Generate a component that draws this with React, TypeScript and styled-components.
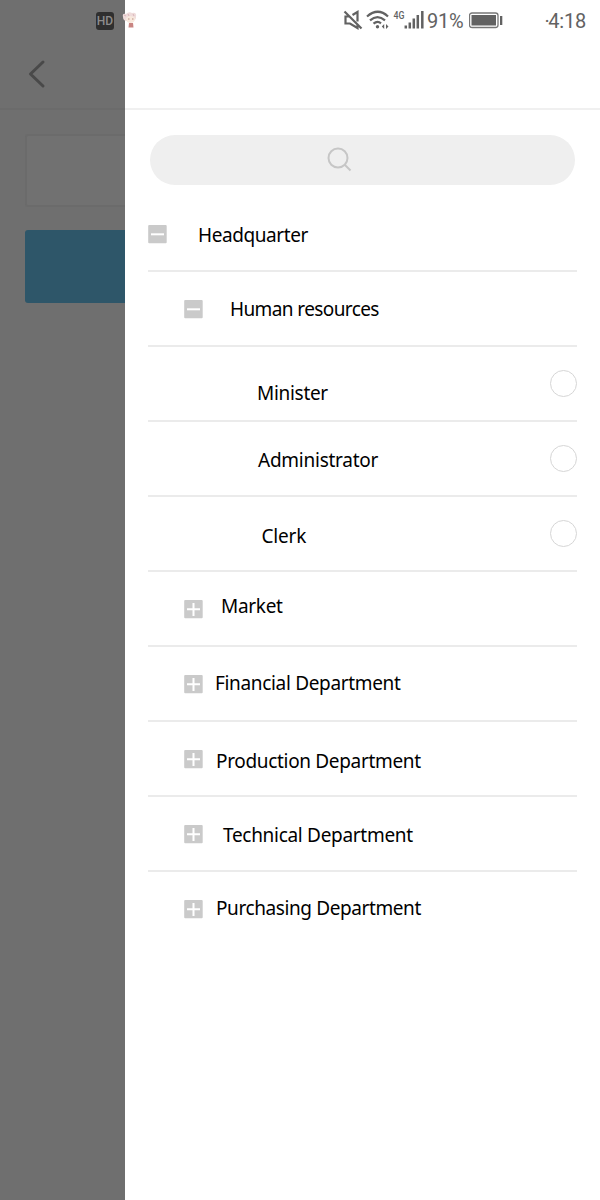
import React from "react";
import styled, { createGlobalStyle } from "styled-components";

const GlobalStyle = createGlobalStyle`
  * { box-sizing: border-box; }
  body { margin: 0; background: #fff; font-family: "Noto Sans", "Open Sans", sans-serif; }
`;

const Screen = styled.div`
  position: relative;
  display: grid;
  grid-template-columns: 125px 475px;
  width: 600px;
  height: 1200px;
  overflow: hidden;
`;

const StatusBar = styled.div`
  position: absolute;
  inset: 0 0 auto 0;
  display: flex;
  align-items: flex-start;
  height: 40px;
  font-family: Roboto, sans-serif;
  color: #626262;
`;

const HdBadge = styled.div`
  width: 18px;
  height: 18px;
  margin: 11.5px 0 0 96px;
  border-radius: 3px;
  background: #2f2f2f;
  color: #8c8c8c;
  font-size: 12px;
  font-weight: 500;
  line-height: 18px;
  text-align: center;
`;

const Mascot = styled.svg`
  margin: 11px 0 0 8px;
`;

const StatusIcons = styled.svg`
  margin-left: 204px;
`;

const StatusText = styled.span<{ $left: number }>`
  margin: 9px 0 0 ${(p) => p.$left}px;
  font-size: 20px;
  line-height: 24px;
  letter-spacing: -0.2px;
`;

const Dot = styled.span`
  letter-spacing: -1.5px;
`;

const Battery = styled.svg`
  margin: 12px 0 0 5px;
`;

const Backdrop = styled.div`
  background: #6f6f6f;
  overflow: hidden;
`;

const BackBar = styled.div`
  height: 110px;
  padding: 59px 0 0 27px;
  border-bottom: 2px solid #6b6b6b;
`;

const DimField = styled.div`
  height: 73px;
  margin: 24px 0 0 25px;
  border: 2px solid #6b6b6b;
  border-right: 0;
  border-radius: 3px 0 0 3px;
  background: #717171;
`;

const DimButton = styled.div`
  height: 73px;
  margin: 23px 0 0 25px;
  border-radius: 3px 0 0 3px;
  background: #2e5669;
`;

const Drawer = styled.div`
  background: #fff;
`;

const DrawerHeader = styled.div`
  height: 110px;
  border-bottom: 2px solid #f0f0f0;
`;

const SearchField = styled.div`
  display: flex;
  width: 425px;
  height: 50px;
  margin: 25px 0 12px 25px;
  padding: 12px 0 0 177px;
  border-radius: 25px;
  background: #efefef;
`;

const Tree = styled.div`
  width: 429px;
  margin-left: 23px;
`;

const Row = styled.div<{ $indent: number; $last?: boolean }>`
  display: flex;
  align-items: flex-start;
  height: 75px;
  padding-left: ${(p) => p.$indent}px;
  border-bottom: ${(p) => (p.$last ? "0" : "2px solid #ebebeb")};
`;

const Toggle = styled.svg<{ $root: boolean }>`
  flex: none;
  width: 19px;
  height: 19px;
  margin: 28px ${(p) => (p.$root ? 0.5 : 0)}px 0 ${(p) => (p.$root ? -0.5 : 0)}px;
`;

const Label = styled.span<{ $gap: number; $top: number; $spacing: number }>`
  margin: ${(p) => p.$top}px 0 0 ${(p) => p.$gap}px;
  font-size: 19px;
  line-height: 26px;
  letter-spacing: ${(p) => p.$spacing}px;
  white-space: nowrap;
  color: #000;
`;

const Radio = styled.div`
  width: 27px;
  height: 27px;
  margin: 22.5px 0 0 auto;
  border: 1px solid #d6d6d6;
  border-radius: 50%;
`;

type Item = {
  name: string;
  indent: number;
  gap: number;
  top: number;
  spacing: number;
  kind: "open" | "closed" | "leaf";
};

const items: Item[] = [
  { name: "Headquarter", indent: 0, gap: 31, top: 25, spacing: -0.42, kind: "open" },
  { name: "Human resources", indent: 36, gap: 27, top: 24, spacing: -0.6, kind: "open" },
  { name: "Minister", indent: 36, gap: 73, top: 33, spacing: -0.3, kind: "leaf" },
  { name: "Administrator", indent: 36, gap: 74, top: 25, spacing: -0.25, kind: "leaf" },
  { name: "Clerk", indent: 36, gap: 77.5, top: 26, spacing: -0.2, kind: "leaf" },
  { name: "Market", indent: 36, gap: 18, top: 21, spacing: -0.3, kind: "closed" },
  { name: "Financial Department", indent: 36, gap: 12, top: 23, spacing: -0.33, kind: "closed" },
  { name: "Production Department", indent: 36, gap: 13, top: 26, spacing: -0.33, kind: "closed" },
  { name: "Technical Department", indent: 36, gap: 20, top: 25, spacing: -0.3, kind: "closed" },
  { name: "Purchasing Department", indent: 36, gap: 13, top: 23, spacing: -0.4, kind: "closed" },
];

function ToggleIcon({ open, root }: { open: boolean; root: boolean }) {
  return (
    <Toggle viewBox="0 0 19 19" $root={root}>
      <rect x="0.200" y="0" width="18.500" height="18.300" rx="1" fill="#cacaca" />
      <path d={open ? "M3 9.300h13" : "M3 9.300h13M9.500 3v13"} stroke="#fff" strokeWidth="2" />
    </Toggle>
  );
}

export default function App() {
  return (
    <>
      <GlobalStyle />
      <Screen>
        <Backdrop>
          <BackBar>
            <svg width="20" height="30" viewBox="0 0 20 30" fill="none">
              <path d="M16 3L3.500 15L16 27" stroke="#494949" strokeWidth="3" strokeLinecap="round" strokeLinejoin="round" />
            </svg>
          </BackBar>
          <DimField />
          <DimButton />
        </Backdrop>
        <Drawer>
          <DrawerHeader />
          <SearchField>
            <svg width="26" height="26" viewBox="0 0 26 26" fill="none" stroke="#c6c6c6" strokeWidth="2">
              <circle cx="11" cy="11" r="9.500" />
              <path d="M17.500 17.500L23.500 23.500" />
            </svg>
          </SearchField>
          <Tree>
            {items.map((item, i) => (
              <Row key={item.name} $indent={item.indent} $last={i === items.length - 1}>
                {item.kind !== "leaf" && <ToggleIcon open={item.kind === "open"} root={i === 0} />}
                <Label $gap={item.gap} $top={item.top} $spacing={item.spacing}>
                  {item.name}
                </Label>
                {item.kind === "leaf" && <Radio />}
              </Row>
            ))}
          </Tree>
        </Drawer>
        <StatusBar>
          <HdBadge>HD</HdBadge>
          <Mascot width="16" height="18" viewBox="0 0 16 18">
            <path d="M1 6Q0 2 4 3Q7 0 10 2Q15 1 14 6Q14 9 11 10L5 10Q1 10 1 6Z" fill="#efdcdb" />
            <path d="M4 7Q8 3 13 7Q13 12 8.500 12Q4 12 4 7Z" fill="#f8e9dd" />
            <path d="M2 4l2 1M6 3l1 2M11 3l1 2" stroke="#d9b5b9" />
            <path d="M6 8h1.500M10 8h1.500" stroke="#b99084" />
            <path d="M7 12h4l.5 4.500h-5Z" fill="#c98582" />
          </Mascot>
          <StatusIcons width="84" height="36" viewBox="0 0 84 36" fill="none" stroke="#626262">
            <path d="M2.500 11.500L19.500 28.500M7.500 16.500H3.500V23.500H8L15.500 28V25M10.500 15L15.500 12V21.500" strokeWidth="2.200" />
            <path d="M25 16.500Q36 7 46 16.500M28 20.300Q35.500 13.800 43 20.300M31.500 23.700Q35.500 20.300 39 23.300" strokeWidth="2.200" />
            <circle cx="35.500" cy="26.700" r="1.700" fill="#626262" stroke="none" />
            <path d="M42.200 24L39.800 26.500L42.200 29ZM44 24L46.500 26.500L44 29Z" fill="#626262" stroke="none" />
            <text x="51.500" y="19" fontSize="10.500" fontWeight="500" textLength="11" lengthAdjust="spacingAndGlyphs" fill="#626262" stroke="none">4G</text>
            <path d="M63.800 28.500V25.500M67.800 28.500V22.500M71.800 28.500V18.500M75.800 28.500V15M80.300 28.500V11" strokeWidth="2.500" />
          </StatusIcons>
          <StatusText $left={1}>91%</StatusText>
          <Battery width="36" height="17" viewBox="0 0 36 17">
            <rect x="0.500" y="1" width="28.500" height="14.500" rx="2.500" fill="none" stroke="#777" strokeWidth="1.300" />
            <rect x="2.500" y="3" width="24.500" height="10.500" fill="#626262" />
            <rect x="31" y="4" width="2.300" height="9" fill="#626262" />
          </Battery>
          <StatusText $left={40}>
            <Dot>·</Dot>4:18
          </StatusText>
        </StatusBar>
      </Screen>
    </>
  );
}
